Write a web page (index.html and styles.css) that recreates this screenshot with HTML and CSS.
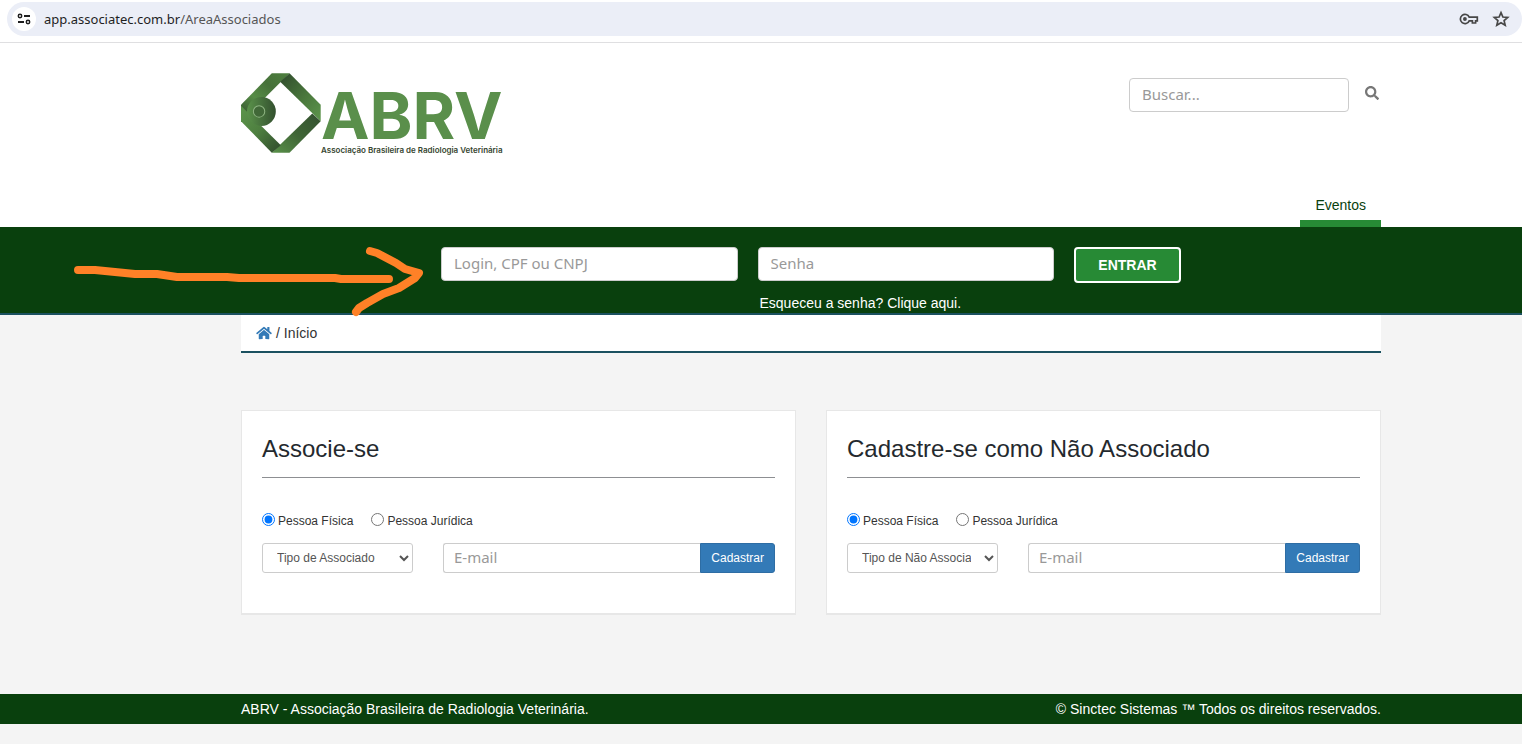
FILE: index.html
```html
<!DOCTYPE html>
<html lang="pt-br">
<head>
  <meta charset="UTF-8">
  <meta name="viewport" content="width=device-width, initial-scale=1.0">
  <title>ABRV - Área de Associados</title>
  <link rel="stylesheet" href="styles.css">
</head>
<body>
  <div class="browser-bar">
    <div class="address">
      <span class="site-info">
        <svg width="14" height="12" viewBox="0 0 14 12" fill="none" stroke="#1f1f1f" stroke-width="2">
          <circle cx="3" cy="3" r="1.7" stroke-width="1.5"/>
          <path d="M7 3h6M1 9h6"/>
          <circle cx="11" cy="9" r="1.7" stroke-width="1.5"/>
        </svg>
      </span>
      <span class="url">app.associatec.com.br<span class="url-path">/AreaAssociados</span></span>
      <svg class="bar-icon" width="20" height="12" viewBox="0 0 20 12" fill="none" stroke="#474747">
        <path d="M10.2 4.2A4.6 4.6 0 1 0 10.2 7.8H13.4V10H16.6V7.8H18.3V4.2Z" stroke-width="1.7"/>
        <circle cx="5.9" cy="6" r="1.9" fill="#474747" stroke="none"/>
      </svg>
      <svg class="bar-icon" width="18" height="18" viewBox="0 0 18 18" fill="none" stroke="#474747" stroke-width="1.7">
        <path d="M9 2.6L10.9 7L15.7 7.4L12.1 10.6L13.2 15.3L9 12.8L4.8 15.3L5.9 10.6L2.3 7.4L7.1 7Z"/>
      </svg>
    </div>
  </div>

  <header class="header wrap">
    <a class="logo" href="#">
      <svg class="logo-mark" width="80" height="80" viewBox="33 38 239 239">
        <defs>
          <linearGradient id="gTopLeft" x1="0" y1="1" x2="1" y2="0">
            <stop offset="0" stop-color="#35542f"/>
            <stop offset=".35" stop-color="#568c46"/>
            <stop offset=".65" stop-color="#467139"/>
            <stop offset="1" stop-color="#4e803f"/>
          </linearGradient>
          <linearGradient id="gTopRight" x1="0" y1="0" x2="1" y2="1">
            <stop offset="0" stop-color="#2f4a2c"/>
            <stop offset=".55" stop-color="#4a783c"/>
            <stop offset="1" stop-color="#5d964c"/>
          </linearGradient>
          <linearGradient id="gBottomRight" x1="1" y1="0" x2="0" y2="1">
            <stop offset="0" stop-color="#33502f"/>
            <stop offset=".5" stop-color="#3f6536"/>
            <stop offset="1" stop-color="#5a924a"/>
          </linearGradient>
          <linearGradient id="gBottomLeft" x1="0" y1="0" x2="1" y2="1">
            <stop offset="0" stop-color="#5d964c"/>
            <stop offset=".5" stop-color="#4d7e3f"/>
            <stop offset="1" stop-color="#2f4a2c"/>
          </linearGradient>
          <linearGradient id="gDisc" x1="0" y1="0" x2="1" y2="0">
            <stop offset="0" stop-color="#5a924a"/>
            <stop offset="1" stop-color="#33502f"/>
          </linearGradient>
        </defs>
        <path fill="url(#gTopLeft)" d="M125 39H178L54 163L33 140V133Z"/>
        <path fill="url(#gTopRight)" d="M178 39L271 133V182L150 64Z"/>
        <path fill="url(#gBottomRight)" d="M246 159L271 182L178 276H125Z"/>
        <path fill="url(#gBottomLeft)" d="M33 136L152 254L125 276L33 182Z"/>
        <circle cx="94" cy="153" r="43" fill="url(#gDisc)"/>
        <circle cx="87" cy="153" r="17" fill="#416838" stroke="#8fb583" stroke-width="3"/>
      </svg>
      <span class="logo-text">
        <span class="logo-name">ABRV</span>
        <span class="logo-tagline">Associação Brasileira de Radiologia Veterinária</span>
      </span>
    </a>

    <div class="header-side">
      <form class="search">
        <input class="field search-field" type="text" placeholder="Buscar..." aria-label="Buscar">
        <button class="search-btn" type="button" aria-label="Pesquisar">
          <svg width="14" height="14" viewBox="0 0 512 512" fill="#777">
            <path d="M505 442.7L405.3 343c-4.5-4.5-10.6-7-17-7H372c27.6-35.3 44-79.7 44-128C416 93.1 322.9 0 208 0S0 93.1 0 208s93.1 208 208 208c48.3 0 92.7-16.4 128-44v16.3c0 6.4 2.5 12.5 7 17l99.7 99.7c9.4 9.4 24.6 9.4 33.9 0l28.3-28.3c9.4-9.4 9.4-24.6.1-34zM208 336c-70.7 0-128-57.2-128-128 0-70.7 57.2-128 128-128 70.7 0 128 57.2 128 128 0 70.7-57.2 128-128 128z"/>
          </svg>
        </button>
      </form>
      <nav class="menu">
        <a class="menu-link" href="#">Eventos</a>
      </nav>
    </div>
  </header>

  <section class="login-bar">
    <form class="login-form">
      <input class="field" type="text" placeholder="Login, CPF ou CNPJ" aria-label="Login, CPF ou CNPJ">
      <div class="password">
        <input class="field" type="password" placeholder="Senha" aria-label="Senha">
        <a class="forgot" href="#">Esqueceu a senha? Clique aqui.</a>
      </div>
      <button class="btn-enter" type="button">ENTRAR</button>
    </form>
    <svg class="arrow" width="356" height="74" viewBox="0 0 356 74" fill="none" stroke="#ff8127" stroke-width="8" stroke-linecap="round" stroke-linejoin="round">
      <path d="M7 25L24 25L44 27L64 29L86 29L106 32L156 32L168 33L264 33L270 34L318 34"/>
      <path d="M299 6L306 8L325 18L334 24L348 28L344 33L336 38L328 43L312 49L296 58L288 63L285 67"/>
    </svg>
  </section>

  <main class="wrap">
    <div class="breadcrumb">
      <a class="home" href="#" aria-label="Página inicial">
        <svg width="16" height="14" viewBox="0 0 576 512" fill="#337ab7">
          <path d="M280.37 148.26L96 300.11V464a16 16 0 0 0 16 16l112.06-.29a16 16 0 0 0 15.92-16V368a16 16 0 0 1 16-16h64a16 16 0 0 1 16 16v95.64a16 16 0 0 0 16 16.05L464 480a16 16 0 0 0 16-16V300L295.67 148.26a12.19 12.19 0 0 0-15.3 0zM571.6 251.47L488 182.56V44.05a12 12 0 0 0-12-12h-56a12 12 0 0 0-12 12v72.61L318.47 43a48 48 0 0 0-61 0L4.34 251.47a12 12 0 0 0-1.6 16.9l25.5 31A12 12 0 0 0 45.15 301l235.22-193.74a12.19 12.19 0 0 1 15.3 0L530.9 301a12 12 0 0 0 16.9-1.6l25.5-31a12 12 0 0 0-1.7-16.93z"/>
        </svg>
      </a>
      <span>/ Início</span>
    </div>

    <div class="cards">
      <section class="card">
        <h2>Associe-se</h2>
        <form>
          <div class="radios">
            <label><input type="radio" name="tipoPessoa" checked> Pessoa Física</label>
            <label><input type="radio" name="tipoPessoa"> Pessoa Jurídica</label>
          </div>
          <div class="signup">
            <select aria-label="Tipo de Associado">
              <option>Tipo de Associado</option>
            </select>
            <div class="email-group">
              <input class="field" type="email" placeholder="E-mail" aria-label="E-mail">
              <button class="btn-signup" type="button">Cadastrar</button>
            </div>
          </div>
        </form>
      </section>

      <section class="card">
        <h2>Cadastre-se como Não Associado</h2>
        <form>
          <div class="radios">
            <label><input type="radio" name="tipoPessoaNao" checked> Pessoa Física</label>
            <label><input type="radio" name="tipoPessoaNao"> Pessoa Jurídica</label>
          </div>
          <div class="signup">
            <select aria-label="Tipo de Não Associado">
              <option>Tipo de Não Associado</option>
            </select>
            <div class="email-group">
              <input class="field" type="email" placeholder="E-mail" aria-label="E-mail">
              <button class="btn-signup" type="button">Cadastrar</button>
            </div>
          </div>
        </form>
      </section>
    </div>
  </main>

  <footer class="footer wrap">
    <span>ABRV - Associação Brasileira de Radiologia Veterinária.</span>
    <span>© Sinctec Sistemas ™ Todos os direitos reservados.</span>
  </footer>
</body>
</html>
```
FILE: styles.css
```css
* {
  box-sizing: border-box;
}

body {
  margin: 0;
  background: #f4f4f4;
  color: #333;
  font-family: "Liberation Sans", Arial, sans-serif;
  font-size: 14px;
  line-height: 20px;
}

a {
  color: inherit;
  text-decoration: none;
}

.wrap {
  padding-left: 241px;
  padding-right: 141px;
}

/* browser address bar */
.browser-bar {
  background: #fff;
  padding: 2px 0 6px 7px;
  border-bottom: 1px solid #dfdfe1;
}

.address {
  display: flex;
  align-items: center;
  height: 34px;
  padding: 0 12px 0 5px;
  border-radius: 17px;
  background: #ebeef7;
}

.site-info {
  display: flex;
  align-items: center;
  justify-content: center;
  width: 24px;
  height: 24px;
  margin-right: 8px;
  border-radius: 50%;
  background: #fff;
}

.url {
  flex: 1;
  color: #1f1f1f;
  font-family: "Noto Sans", sans-serif;
  font-size: 13px;
}

.url-path {
  color: #555;
}

.bar-icon {
  margin-left: 13px;
}

/* header */
.header {
  display: flex;
  justify-content: space-between;
  height: 184px;
  background: #fff;
}

.logo {
  display: flex;
  align-items: flex-start;
  padding-top: 30px;
}

.logo-text {
  display: flex;
  flex-direction: column;
  padding-top: 18px;
  font-family: Inter, sans-serif;
}

.logo-name {
  color: #5a8f4b;
  font-size: 65px;
  font-weight: 700;
  line-height: 50px;
}

.logo-tagline {
  padding-top: 3px;
  color: #35452f;
  font-size: 8px;
  font-weight: 600;
  line-height: 12px;
}

.header-side {
  display: flex;
  flex-direction: column;
  justify-content: space-between;
  align-items: flex-end;
}

.search {
  display: flex;
  align-items: flex-start;
  padding-top: 35px;
}

.field {
  width: 100%;
  height: 34px;
  padding: 0 12px 2px;
  border: 1px solid #ccc;
  border-radius: 4px;
  background: #fff;
  color: #555;
  font-family: "Noto Sans", sans-serif;
  font-size: 15px;
}

.field::placeholder {
  color: #999;
  opacity: 1;
}

.search-field {
  width: 220px;
}

.search-btn {
  display: flex;
  margin-left: 16px;
  padding: 8px 2px 8px 0;
  border: 0;
  background: none;
  cursor: pointer;
}

.menu-link {
  display: block;
  padding: 0 15px 5px;
  border-bottom: 7px solid #278a35;
  color: #0a3f0e;
}

/* login */
.login-bar {
  position: relative;
  padding: 20px 341px 0 441px;
  border-bottom: 2px solid #1b5160;
  background: #09400d;
}

.login-form {
  display: grid;
  grid-template-columns: 1fr 1fr 107px;
  gap: 20px;
  align-items: start;
}

.forgot {
  display: block;
  padding: 12px 2px 0;
  color: #fff;
}

.btn-enter {
  height: 36px;
  border: 2px solid #fff;
  border-radius: 4px;
  background: #278a35;
  color: #fff;
  font-family: inherit;
  font-size: 14px;
  font-weight: bold;
  cursor: pointer;
}

/* hand-drawn pointer to the login field */
.arrow {
  position: absolute;
  left: 71px;
  top: 18px;
}

/* content */
.breadcrumb {
  display: flex;
  align-items: center;
  gap: 4px;
  height: 38px;
  padding: 0 15px;
  border-bottom: 2px solid #1b5160;
  background: #fff;
}

.home {
  display: flex;
}

.cards {
  display: grid;
  grid-template-columns: 1fr 1fr;
  gap: 30px;
  padding: 57px 0 79px;
}

.card {
  padding: 20px 20px 40px;
  border: 1px solid #e7e7e7;
  border-bottom-width: 2px;
  background: #fff;
}

.card h2 {
  margin: 0 0 30px;
  padding: 3px 0 13px;
  border-bottom: 1px solid #8d8f92;
  color: #24292e;
  font-size: 24px;
  font-weight: normal;
  line-height: 30px;
}

.radios {
  display: flex;
  gap: 18px;
  margin-bottom: 12px;
  font-size: 12px;
}

.radios label {
  display: flex;
  align-items: center;
  gap: 3px;
  padding-top: 3px;
}

.radios input {
  margin: 0 0 4px;
}

.signup {
  display: flex;
  gap: 30px;
}

.signup select {
  width: 151px;
  height: 30px;
  padding: 5px 10px;
  border: 1px solid #ccc;
  border-radius: 3px;
  background: #fff;
  color: #555;
  font-family: inherit;
  font-size: 12px;
}

.email-group {
  display: flex;
  flex: 1;
}

.email-group .field {
  height: 30px;
  padding: 0 10px 2px;
  border-right: 0;
  border-radius: 3px 0 0 3px;
}

.btn-signup {
  padding: 0 10px;
  border: 1px solid #2e6da4;
  border-radius: 0 3px 3px 0;
  background: #337ab7;
  color: #fff;
  font-family: inherit;
  font-size: 12px;
  cursor: pointer;
}

.footer {
  display: flex;
  justify-content: space-between;
  padding-top: 5px;
  padding-bottom: 5px;
  background: #09400d;
  color: #fff;
}
```
